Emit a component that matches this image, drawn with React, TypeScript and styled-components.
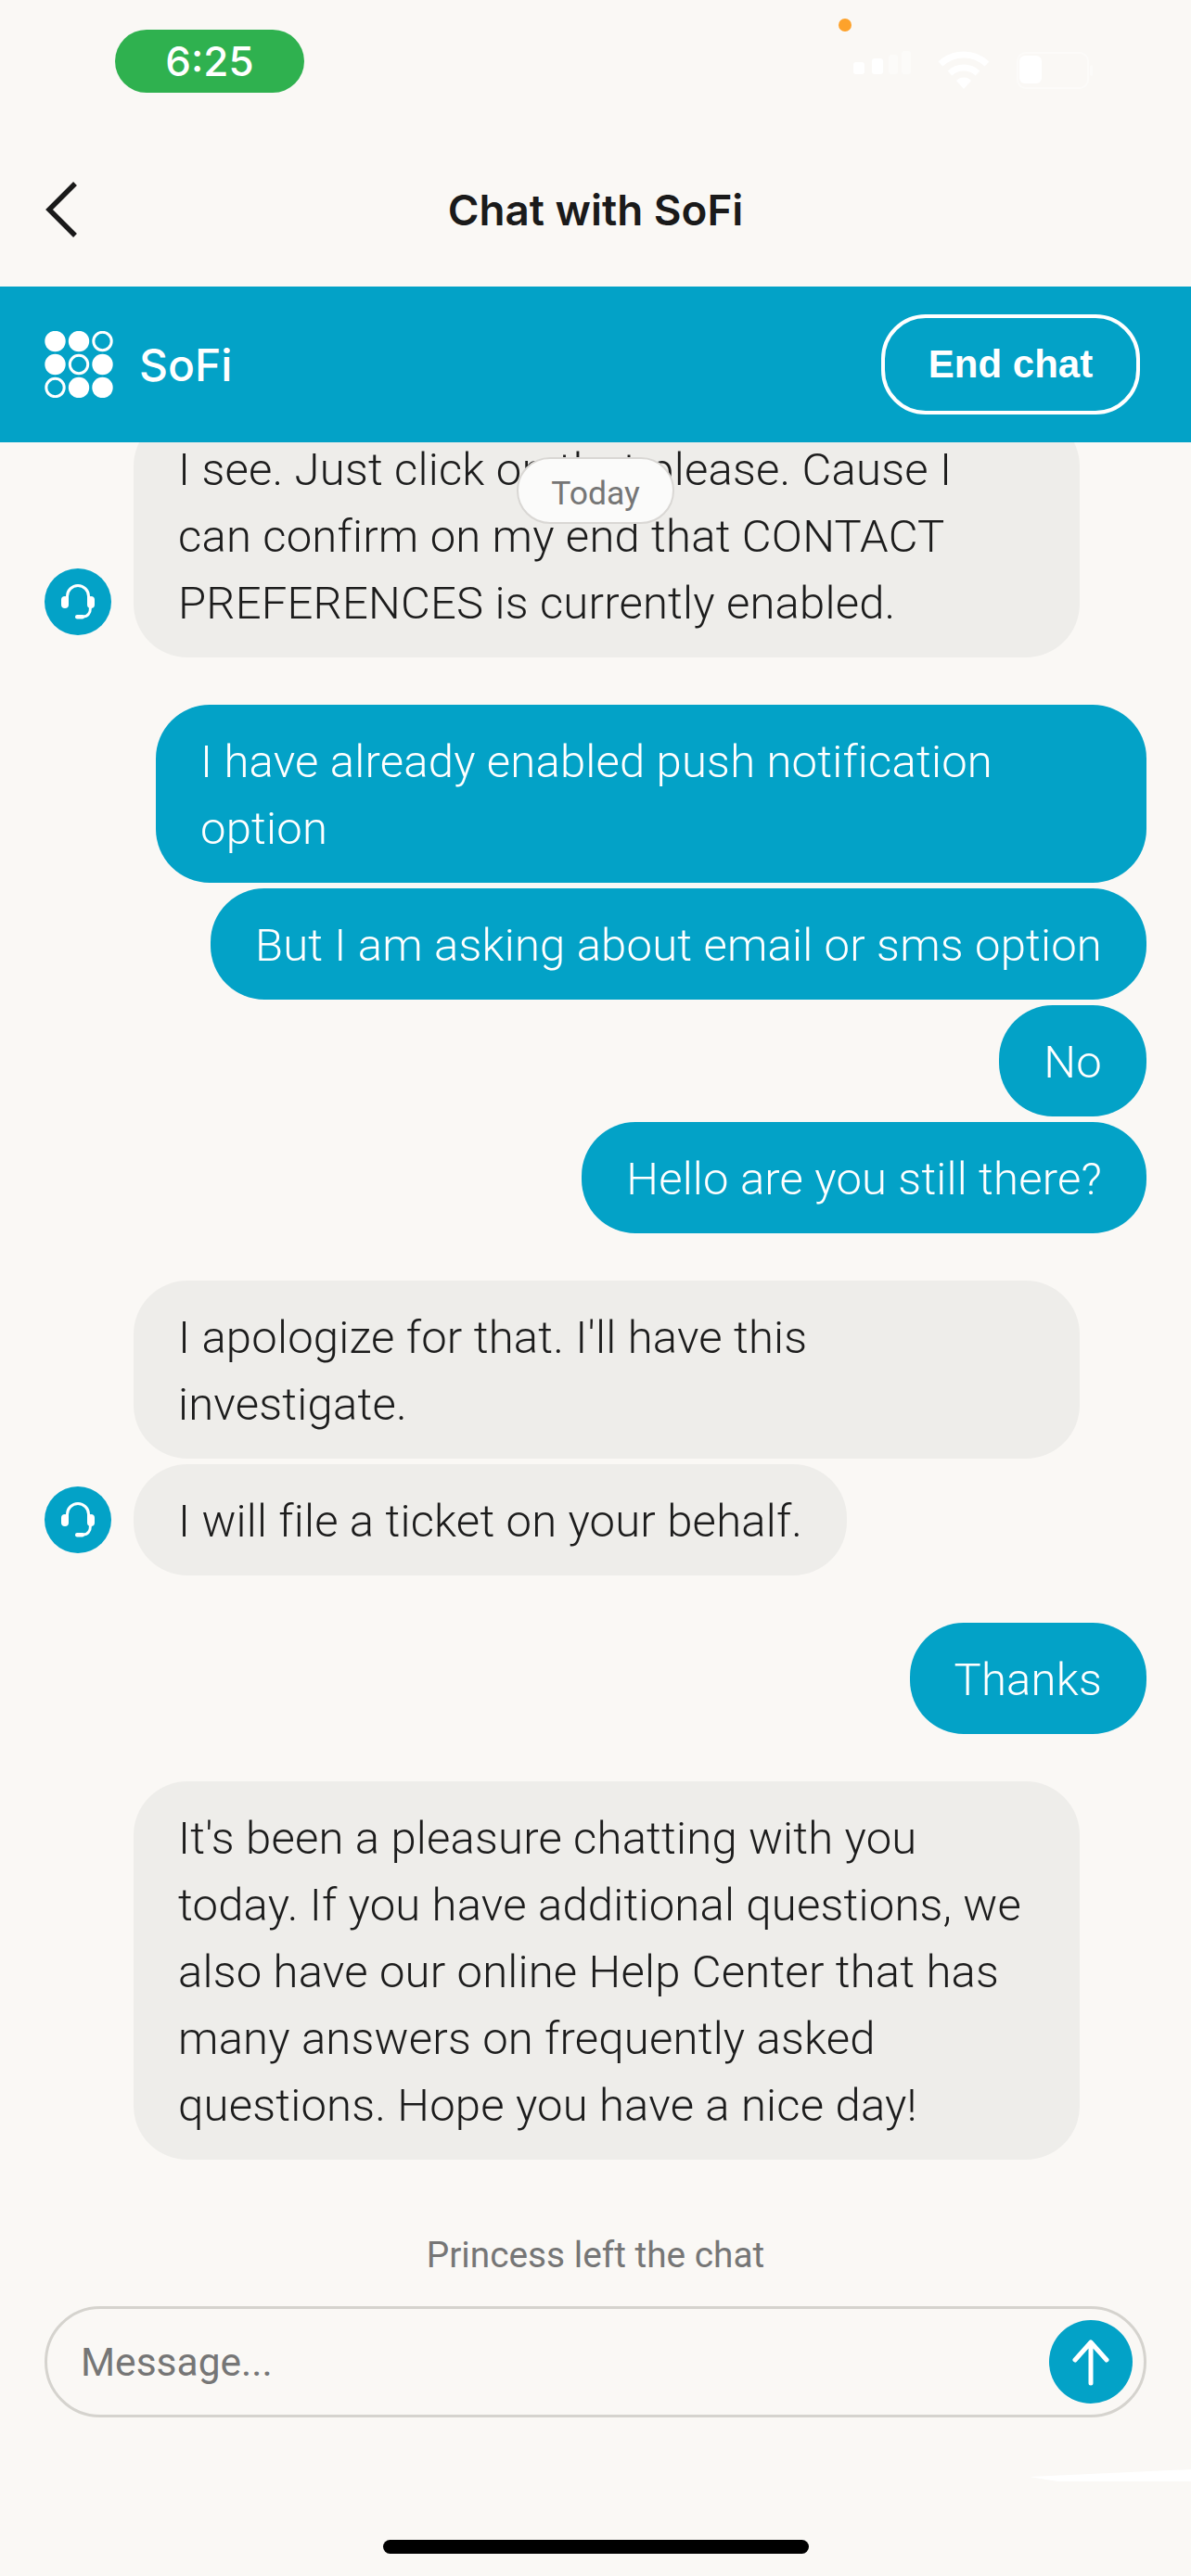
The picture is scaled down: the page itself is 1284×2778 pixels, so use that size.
import styled, { createGlobalStyle } from "styled-components";

const TEAL = "#03a2c7";
const PAGE = "#faf8f5";

const GlobalStyle = createGlobalStyle`
  html, body {
    margin: 0;
    padding: 0;
    background: ${PAGE};
  }
  * {
    box-sizing: border-box;
  }
`;

const Screen = styled.div`
  position: relative;
  display: flex;
  flex-direction: column;
  width: 1284px;
  height: 2778px;
  overflow: hidden;
  background: ${PAGE};
  font-family: "Roboto", "Liberation Sans", sans-serif;
`;

const StatusBar = styled.div`
  display: flex;
  justify-content: space-between;
  height: 143px;
  padding: 32px 104px 0 124px;
`;

const TimePill = styled.div`
  display: flex;
  align-items: center;
  justify-content: center;
  width: 204px;
  height: 68px;
  border-radius: 34px;
  background: #2fb14f;
  color: #fff;
  font-family: "Inter", sans-serif;
  font-size: 44px;
  font-weight: 500;
`;

const StatusIcons = styled.div`
  display: flex;
  align-items: flex-start;
  gap: 28px;
  padding-top: 23px;
`;

const OrangeDot = styled.span`
  position: absolute;
  top: 20px;
  left: 904px;
  width: 14px;
  height: 14px;
  border-radius: 50%;
  background: #fda22b;
`;

const NavBar = styled.div`
  display: grid;
  grid-template-columns: 1fr auto 1fr;
  align-items: center;
  height: 166px;
  padding: 0 48px;
`;

const NavTitle = styled.div`
  color: #1a1a1a;
  font-family: "Inter", sans-serif;
  font-size: 45.8px;
  font-weight: 600;
`;

const ChatHeader = styled.div`
  display: flex;
  align-items: center;
  justify-content: space-between;
  flex: none;
  height: 168px;
  padding: 0 55px 0 48px;
  background: ${TEAL};
`;

const Brand = styled.div`
  display: flex;
  align-items: center;
  gap: 28px;
  color: #fff;
  font-family: "Inter", sans-serif;
  font-size: 48px;
  font-weight: 500;
`;

const EndChat = styled.button`
  width: 279px;
  height: 108px;
  padding: 0;
  border: 4px solid #fff;
  border-radius: 48px;
  background: transparent;
  color: #fff;
  font-family: "Liberation Sans", sans-serif;
  font-size: 42px;
  font-weight: 700;
`;

const MessageList = styled.div`
  position: relative;
  flex: 1;
  min-height: 0;
  overflow: hidden;
  padding: 0 48px;
`;

const ScrollContent = styled.div`
  display: flex;
  flex-direction: column;
  gap: 51px;
  margin-top: -32px;
`;

const TodayPill = styled.div`
  position: absolute;
  top: 16px;
  left: 557px;
  display: flex;
  align-items: center;
  justify-content: center;
  width: 170px;
  height: 72px;
  padding-top: 5px;
  border: 2px solid #d9d7d4;
  border-radius: 36px;
  background: #fbfbfa;
  color: #767676;
  font-size: 35.5px;
`;

const AgentGroup = styled.div`
  display: grid;
  grid-template-columns: 72px 1fr;
  column-gap: 24px;
`;

const AvatarSlot = styled.div`
  display: flex;
  align-items: flex-end;
  padding-bottom: 24px;
`;

const Stack = styled.div<{ $end?: boolean }>`
  display: flex;
  flex-direction: column;
  align-items: ${(p) => (p.$end ? "flex-end" : "flex-start")};
  gap: 6px;
`;

const Bubble = styled.div<{ $user?: boolean }>`
  width: fit-content;
  max-width: ${(p) => (p.$user ? "1068px" : "1020px")};
  padding: 26px 48px 22px;
  border-radius: 58px;
  background: ${(p) => (p.$user ? TEAL : "#eeedea")};
  color: ${(p) => (p.$user ? "#fff" : "#1c1c1c")};
  font-size: 49px;
  font-weight: 300;
  letter-spacing: 0.2px;
  line-height: 72px;
`;

const Footer = styled.div`
  display: flex;
  flex-direction: column;
  align-items: center;
  flex: none;
  height: 376px;
  padding: 0 48px;
`;

const SystemNote = styled.div`
  height: 85px;
  color: #767676;
  font-size: 38.8px;
  line-height: 60px;
`;

const InputBar = styled.div`
  display: flex;
  align-items: center;
  justify-content: space-between;
  width: 100%;
  height: 120px;
  padding: 0 12px 0 36px;
  border: 3px solid #d5d3ce;
  border-radius: 60px;
`;

const Placeholder = styled.span`
  color: #767676;
  font-size: 42.5px;
`;

const SendButton = styled.div`
  display: flex;
  align-items: center;
  justify-content: center;
  width: 90px;
  height: 90px;
  border-radius: 50%;
  background: ${TEAL};
`;

const HomeBar = styled.div`
  width: 459px;
  height: 15px;
  margin-top: 132px;
  border-radius: 8px;
  background: #000;
`;

const WhiteSliver = styled.svg`
  position: absolute;
  top: 2663px;
  right: 0;
`;

const Logo = () => {
  const rings = ["2,0", "1,1", "0,2"];
  const cells: { x: number; y: number; ring: boolean }[] = [];
  for (let y = 0; y < 3; y++) {
    for (let x = 0; x < 3; x++) {
      cells.push({ x, y, ring: rings.includes(`${x},${y}`) });
    }
  }
  return (
    <svg width="74" height="72" viewBox="0 0 74 72">
      {cells.map((c) => (
        <circle
          key={`${c.x}-${c.y}`}
          cx={11.5 + c.x * 25.5}
          cy={11 + c.y * 25}
          r={c.ring ? 9.7 : 11.2}
          fill={c.ring ? "none" : "#fff"}
          stroke={c.ring ? "#fff" : "none"}
          strokeWidth={3}
        />
      ))}
    </svg>
  );
};

const Avatar = () => (
  <svg width="72" height="72" viewBox="0 0 72 72">
    <circle cx="36" cy="36" r="36" fill={TEAL} />
    <path d="M24.5 34v-4a11.5 11.5 0 0 1 23 0v4" fill="none" stroke="#fff" strokeWidth="3" />
    <rect x="18" y="30" width="8" height="13" rx="4" fill="#fff" />
    <rect x="46" y="30" width="8" height="13" rx="4" fill="#fff" />
    <path d="M49.5 42c0 6-3 10-8 10h-6" fill="none" stroke="#fff" strokeWidth="3" strokeLinecap="round" />
    <rect x="33" y="50" width="10" height="4.5" rx="2.2" fill="#fff" />
  </svg>
);

export default function App() {
  return (
    <>
      <GlobalStyle />
      <Screen>
        <StatusBar>
          <TimePill>6:25</TimePill>
          <StatusIcons>
            <svg width="62" height="40" viewBox="0 0 62 40">
              <rect x="0" y="12" width="12" height="13" rx="3" fill="#fff" />
              <rect x="20" y="8" width="12" height="17" rx="3" fill="#fff" />
              <rect x="38" y="4" width="10" height="21" rx="3" fill="#fcfbf9" />
              <rect x="52" y="0" width="10" height="25" rx="3" fill="#fcfbf9" />
            </svg>
            <svg width="58" height="42" viewBox="0 0 58 42">
              <path d="M4 14a36 36 0 0 1 50 0M14 24a22 22 0 0 1 30 0" fill="none" stroke="#fff" strokeWidth="7" />
              <path d="M21 32a11 11 0 0 1 16 0l-8 9z" fill="#fff" />
            </svg>
            <svg width="84" height="42" viewBox="0 0 84 42">
              <rect x="1" y="2" width="76" height="38" rx="9" fill="none" stroke="#fcfbf9" strokeWidth="2" />
              <rect x="3" y="5" width="24" height="30" rx="6" fill="#fff" />
              <rect x="79" y="15" width="3" height="12" rx="1.5" fill="#fcfbf9" />
            </svg>
          </StatusIcons>
          <OrangeDot />
        </StatusBar>

        <NavBar>
          <svg width="36" height="60" viewBox="0 0 36 60">
            <path d="M33 2 5 30l28 28" fill="none" stroke="#1a1a1a" strokeWidth="5.5" />
          </svg>
          <NavTitle>Chat with SoFi</NavTitle>
        </NavBar>

        <ChatHeader>
          <Brand>
            <Logo />
            SoFi
          </Brand>
          <EndChat>End chat</EndChat>
        </ChatHeader>

        <MessageList>
          <ScrollContent>
            <AgentGroup>
              <AvatarSlot>
                <Avatar />
              </AvatarSlot>
              <Stack>
                <Bubble>
                  I see. Just click on that please. Cause I can confirm on my end that CONTACT PREFERENCES is
                  currently enabled.
                </Bubble>
              </Stack>
            </AgentGroup>

            <Stack $end>
              <Bubble $user>I have already enabled push notification option</Bubble>
              <Bubble $user>But I am asking about email or sms option</Bubble>
              <Bubble $user>No</Bubble>
              <Bubble $user>Hello are you still there?</Bubble>
            </Stack>

            <AgentGroup>
              <AvatarSlot>
                <Avatar />
              </AvatarSlot>
              <Stack>
                <Bubble>I apologize for that. I'll have this investigate.</Bubble>
                <Bubble>I will file a ticket on your behalf.</Bubble>
              </Stack>
            </AgentGroup>

            <Stack $end>
              <Bubble $user>Thanks</Bubble>
            </Stack>

            <AgentGroup>
              <span />
              <Stack>
                <Bubble>
                  It's been a pleasure chatting with you today. If you have additional questions, we also have our
                  online Help Center that has many answers on frequently asked questions. Hope you have a nice day!
                </Bubble>
              </Stack>
            </AgentGroup>
          </ScrollContent>
          <TodayPill>Today</TodayPill>
        </MessageList>

        <Footer>
          <SystemNote>Princess left the chat</SystemNote>
          <InputBar>
            <Placeholder>Message...</Placeholder>
            <SendButton>
              <svg width="44" height="52" viewBox="0 0 44 52">
                <path d="M22 49V5M5 24 22 5l17 19" fill="none" stroke="#fff" strokeWidth="5" strokeLinecap="round" strokeLinejoin="round" />
              </svg>
            </SendButton>
          </InputBar>
          <HomeBar />
        </Footer>

        <WhiteSliver width="174" height="14" viewBox="0 0 174 14">
          <polygon points="174,0 174,13 30,13 0,8" fill="#fff" />
        </WhiteSliver>
      </Screen>
    </>
  );
}
